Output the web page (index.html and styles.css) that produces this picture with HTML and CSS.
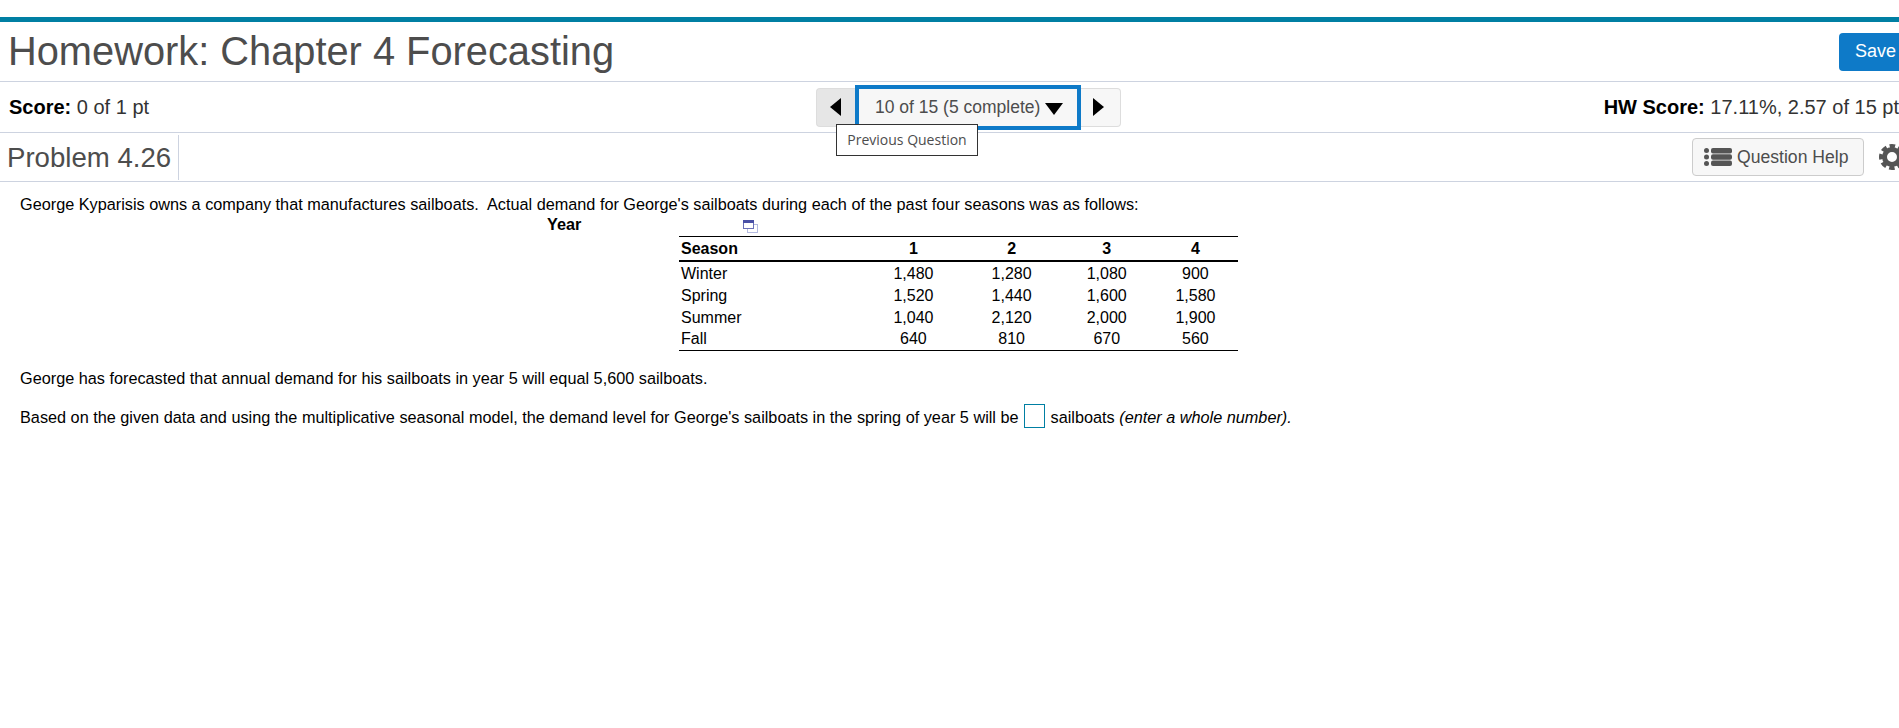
FILE: index.html
```html
<!DOCTYPE html>
<html lang="en">
<head>
    <meta charset="UTF-8">
    <title>Homework: Chapter 4 Forecasting</title>
    <link rel="stylesheet" href="styles.css">
</head>
<body>
    <div class="page">
        <!-- Title bar -->
        <header class="title-bar">
            <h1>Homework: Chapter 4 Forecasting</h1>
            <button class="save-btn" type="button">Save</button>
        </header>

        <!-- Score row -->
        <div class="score-row">
            <p class="score"><strong>Score:</strong> 0 of 1 pt</p>
            <nav class="question-nav">
                <button class="nav-btn nav-prev" type="button" aria-label="Previous Question">
                    <svg width="12" height="18" viewBox="0 0 12 18"><path d="M11 0V18L0 9Z"/></svg>
                </button>
                <button class="nav-current" type="button">10 of 15 (5 complete)
                    <svg width="18" height="12" viewBox="0 0 18 12"><path d="M0 0H18L9 12Z"/></svg>
                </button>
                <button class="nav-btn nav-next" type="button" aria-label="Next Question">
                    <svg width="12" height="18" viewBox="0 0 12 18"><path d="M1 0V18L12 9Z"/></svg>
                </button>
                <div class="tooltip">Previous Question</div>
            </nav>
            <p class="hw-score"><strong>HW Score:</strong> 17.11%, 2.57 of 15 pts</p>
        </div>

        <!-- Problem row -->
        <div class="problem-row">
            <h2>Problem 4.26</h2>
            <div class="problem-tools">
                <button class="help-btn" type="button">
                    <svg width="28" height="18" viewBox="0 0 28 18">
                        <circle cx="2.5" cy="2.5" r="2.5"/><circle cx="2.5" cy="9" r="2.5"/><circle cx="2.5" cy="15.5" r="2.5"/>
                        <rect x="7" y="0" width="21" height="5.4" rx="2"/><rect x="7" y="6.3" width="21" height="5.4" rx="2"/><rect x="7" y="12.6" width="21" height="5.4" rx="2"/>
                    </svg>
                    Question Help
                </button>
                <svg class="gear" width="26" height="26" viewBox="0 0 26 26">
                    <circle cx="13" cy="13" r="7.5" fill="none" stroke="#555" stroke-width="5"/>
                    <circle cx="13" cy="13" r="10.5" fill="none" stroke="#555" stroke-width="5" stroke-dasharray="5.2 3.05" stroke-dashoffset="2.6"/>
                </svg>
            </div>
        </div>

        <!-- Question body -->
        <main class="question">
            <p class="intro">George Kyparisis owns a company that manufactures sailboats.&nbsp; Actual demand for George's sailboats during each of the past four seasons was as follows:</p>
            <div class="table-head">
                <span class="year-label">Year</span>
                <svg class="copy-icon" width="15" height="13" viewBox="0 0 15 13">
                    <rect x="4.5" y="4.5" width="10" height="8" fill="#fff" stroke="#b4bae0"/>
                    <rect x="0.5" y="0.5" width="10" height="8" fill="#fff" stroke="#6a70b8"/>
                    <rect x="0" y="0" width="11" height="3" fill="#4a50a6"/>
                </svg>
            </div>
            <table class="demand-table">
                <thead>
                    <tr><th class="col-season">Season</th><th class="col-1">1</th><th class="col-2">2</th><th class="col-3">3</th><th class="col-4">4</th></tr>
                </thead>
                <tbody>
                    <tr><td>Winter</td><td>1,480</td><td>1,280</td><td>1,080</td><td>900</td></tr>
                    <tr><td>Spring</td><td>1,520</td><td>1,440</td><td>1,600</td><td>1,580</td></tr>
                    <tr><td>Summer</td><td>1,040</td><td>2,120</td><td>2,000</td><td>1,900</td></tr>
                    <tr><td>Fall</td><td>640</td><td>810</td><td>670</td><td>560</td></tr>
                </tbody>
            </table>
            <p class="forecast">George has forecasted that annual demand for his sailboats in year 5 will equal 5,600 sailboats.</p>
            <p class="ask">Based on the given data and using the multiplicative seasonal model, the demand level for George's sailboats in the spring of year 5 will be
                <input class="answer" type="text" aria-label="Answer"> sailboats <em>(enter a whole number).</em></p>
        </main>
    </div>
</body>
</html>
```

FILE: styles.css
```css
html, body {
    margin: 0;
    overflow: hidden;
    background-color: #fff;
}

body {
    font-family: "Liberation Sans", Arial, sans-serif;
    color: #000;
    padding-top: 17px;
}

.page {
    width: 1911px;
    border-top: 5px solid #007fa3;
}

p, h1, h2 {
    margin: 0;
    font-weight: normal;
}

button {
    font-family: inherit;
}

/* Title bar */
.title-bar {
    height: 60px;
    padding: 0 0 0 8px;
    display: flex;
    align-items: center;
    justify-content: space-between;
    box-sizing: border-box;
    border-bottom: 1px solid #cdd3e0;
}

.title-bar h1 {
    font-size: 39.8px;
    color: #4d4d4d;
}

.save-btn {
    width: 72px;
    height: 38px;
    padding: 0 0 0 16px;
    text-align: left;
    background-color: #0e7ac8;
    color: #fff;
    border: none;
    border-radius: 4px;
    font-size: 18px;
}

/* Score row */
.score-row {
    height: 51px;
    padding: 0 0 0 9px;
    box-sizing: border-box;
    border-bottom: 1px solid #cdd3e0;
    display: grid;
    grid-template-columns: 807px auto 1fr;
    align-items: center;
    font-size: 20px;
    color: #333;
}

.score-row strong {
    color: #000;
}

.hw-score {
    text-align: right;
    padding-right: 2px;
}

.question-nav {
    position: relative;
    display: flex;
    align-items: center;
    height: 50px;
}

.nav-btn {
    width: 44px;
    height: 39px;
    padding: 0;
    background-color: #f7f7f7;
    border: 1px solid #ddd;
    display: flex;
    align-items: center;
    justify-content: center;
}

.nav-prev {
    background-color: #e6e6e6;
    border-radius: 4px 0 0 4px;
    border-right: none;
    width: 39px;
}

.nav-next {
    border-radius: 0 4px 4px 0;
    border-left: none;
    width: 40px;
    padding-right: 6px;
}

.nav-current {
    width: 226px;
    height: 45px;
    padding: 0 0 0 16px;
    text-align: left;
    background-color: #f7f7f7;
    border: 4px solid #0e7ac8;
    font-size: 17.5px;
    color: #4d4d4d;
    white-space: nowrap;
}

.nav-current svg {
    vertical-align: -2px;
}

.tooltip {
    position: absolute;
    left: 20px;
    top: 42px;
    width: 142px;
    height: 32px;
    box-sizing: border-box;
    line-height: 30px;
    text-align: center;
    background-color: #fff;
    border: 1px solid #333;
    font-family: "Open Sans", sans-serif;
    font-size: 14px;
    color: #4d4d4d;
}

/* Problem row */
.problem-row {
    height: 49px;
    padding-left: 7px;
    box-sizing: border-box;
    border-bottom: 1px solid #cdd3e0;
    display: flex;
    align-items: center;
    justify-content: space-between;
}

.problem-row h2 {
    font-size: 27.6px;
    color: #4d4d4d;
    height: 45px;
    line-height: 45px;
    padding-right: 7px;
    border-right: 1px solid #cdd3e0;
}

.problem-tools {
    display: flex;
    align-items: center;
    gap: 15px;
    padding-right: 6px;
}

.help-btn {
    width: 172px;
    height: 38px;
    padding: 0 0 0 11px;
    display: flex;
    align-items: center;
    gap: 5px;
    background-color: #f7f7f7;
    border: 1px solid #ccc;
    border-radius: 4px;
    font-size: 17.6px;
    color: #4d4d4d;
}

.help-btn svg {
    fill: #555;
}

/* Question body */
.question {
    padding: 12px 0 0 20px;
    font-size: 16.25px;
    line-height: 20px;
}

.table-head {
    position: relative;
    height: 22px;
    font-weight: bold;
}

.year-label {
    margin-left: 527px;
}

.copy-icon {
    position: absolute;
    left: 723px;
    top: 6px;
}

.demand-table {
    margin-left: 659px;
    width: 559px;
    border-collapse: collapse;
    table-layout: fixed;
    border-top: 1px solid #000;
    border-bottom: 1px solid #000;
    font-size: 16px;
}

.demand-table th {
    height: 23px;
    padding: 0;
    text-align: center;
    border-bottom: 2px solid #000;
}

.demand-table td {
    height: 22px;
    padding: 1px 0 0;
    box-sizing: border-box;
    text-align: center;
}

.demand-table tbody tr:first-child td {
    height: 23px;
    padding-top: 2px;
}

.demand-table th:first-child,
.demand-table td:first-child {
    text-align: left;
    padding-left: 2px;
}

.col-season { width: 183px; }
.col-1 { width: 98px; }
.col-2 { width: 98px; }
.col-3 { width: 92px; }
.col-4 { width: 85px; }

.forecast {
    margin-top: 17px;
}

.ask {
    margin-top: 16px;
}

.answer {
    width: 21px;
    height: 24px;
    box-sizing: border-box;
    padding: 0;
    margin: 0 1px 6px;
    vertical-align: middle;
    border: 1px solid #007fa3;
}
```
